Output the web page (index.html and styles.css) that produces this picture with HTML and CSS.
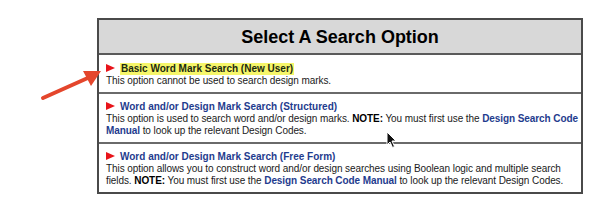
FILE: index.html
```html
<!DOCTYPE html>
<html lang="en">
<head>
    <meta charset="UTF-8">
    <title>Select A Search Option</title>
    <link rel="stylesheet" href="styles.css">
</head>
<body>

    <div class="page">
        <div class="options">
            <div class="options-head">Select A Search Option</div>

            <div class="option first">
                <div class="option-title"><span class="tri"></span><span class="hl">Basic Word Mark Search (New User)</span></div>
                <div class="option-text">This option cannot be used to search design marks.</div>
            </div>

            <div class="option">
                <div class="option-title"><span class="tri"></span><a href="#">Word and/or Design Mark Search (Structured)</a></div>
                <div class="option-text">This option is used to search word and/or design marks. <b>NOTE:</b> You must first use the <a href="#">Design Search Code Manual</a> to look up the relevant Design Codes.</div>
            </div>

            <div class="option">
                <div class="option-title"><span class="tri"></span><a href="#">Word and/or Design Mark Search (Free Form)</a></div>
                <div class="option-text">This option allows you to construct word and/or design searches using Boolean logic and multiple search fields. <b>NOTE:</b> You must first use the <a href="#">Design Search Code Manual</a> to look up the relevant Design Codes.</div>
            </div>
        </div>

        <!-- pointer arrow drawn on top -->
        <svg class="callout" width="70" height="40" viewBox="0 0 70 40">
            <line x1="3" y1="35" x2="50" y2="14" stroke="#e4462c" stroke-width="4" stroke-linecap="round"/>
            <polygon points="61,8 43,8 51,23" fill="#e4462c"/>
        </svg>

        <svg class="cursor" width="12" height="18" viewBox="0 0 12 18">
            <path d="M1 1 L1 14 L4 11 L6.5 16.5 L8.5 15.5 L6 10 L10 10 Z" fill="#111" stroke="#fff" stroke-width="1"/>
        </svg>
    </div>

</body>
</html>
```

FILE: styles.css
```css
body {
    margin: 0;
    background: #fff;
    font-family: "Liberation Sans", Arial, sans-serif;
}
.page {
    position: relative;
    padding: 18px 0 0 97px;
}
.options {
    width: 482px;
    border: 2px solid #4a4a4a;
}
.options-head {
    background: #d8d8d8;
    border-bottom: 2px solid #5a5a5a;
    height: 33px;
    line-height: 34px;
    text-align: center;
    font-size: 18px;
    font-weight: bold;
    color: #000;
}
.option {
    padding: 7px 2px 5px 7px;
    font-size: 10px;
    line-height: 12px;
    color: #1a1a1a;
    border-bottom: 2px solid #6a6a6a;
}
.option.first {
    padding-top: 8px;
}
.option:last-child {
    border-bottom: none;
}
.option-title {
    font-weight: bold;
    display: flex;
    align-items: center;
}
.option-text {
    letter-spacing: -0.08px;
}
.option a {
    color: #1f3c8e;
    font-weight: bold;
    text-decoration: none;
}
.tri {
    width: 0;
    height: 0;
    border-top: 4px solid transparent;
    border-bottom: 4px solid transparent;
    border-left: 9px solid #e8141a;
    margin-right: 5px;
    margin-top: -3px;
}
.hl {
    background: #f6f66a;
    color: #1c2a10;
    padding: 0 1px;
}
.option-text b {
    color: #000;
}
.callout {
    position: absolute;
    left: 40px;
    top: 63px;
}
.cursor {
    position: absolute;
    left: 386px;
    top: 131px;
}
```
